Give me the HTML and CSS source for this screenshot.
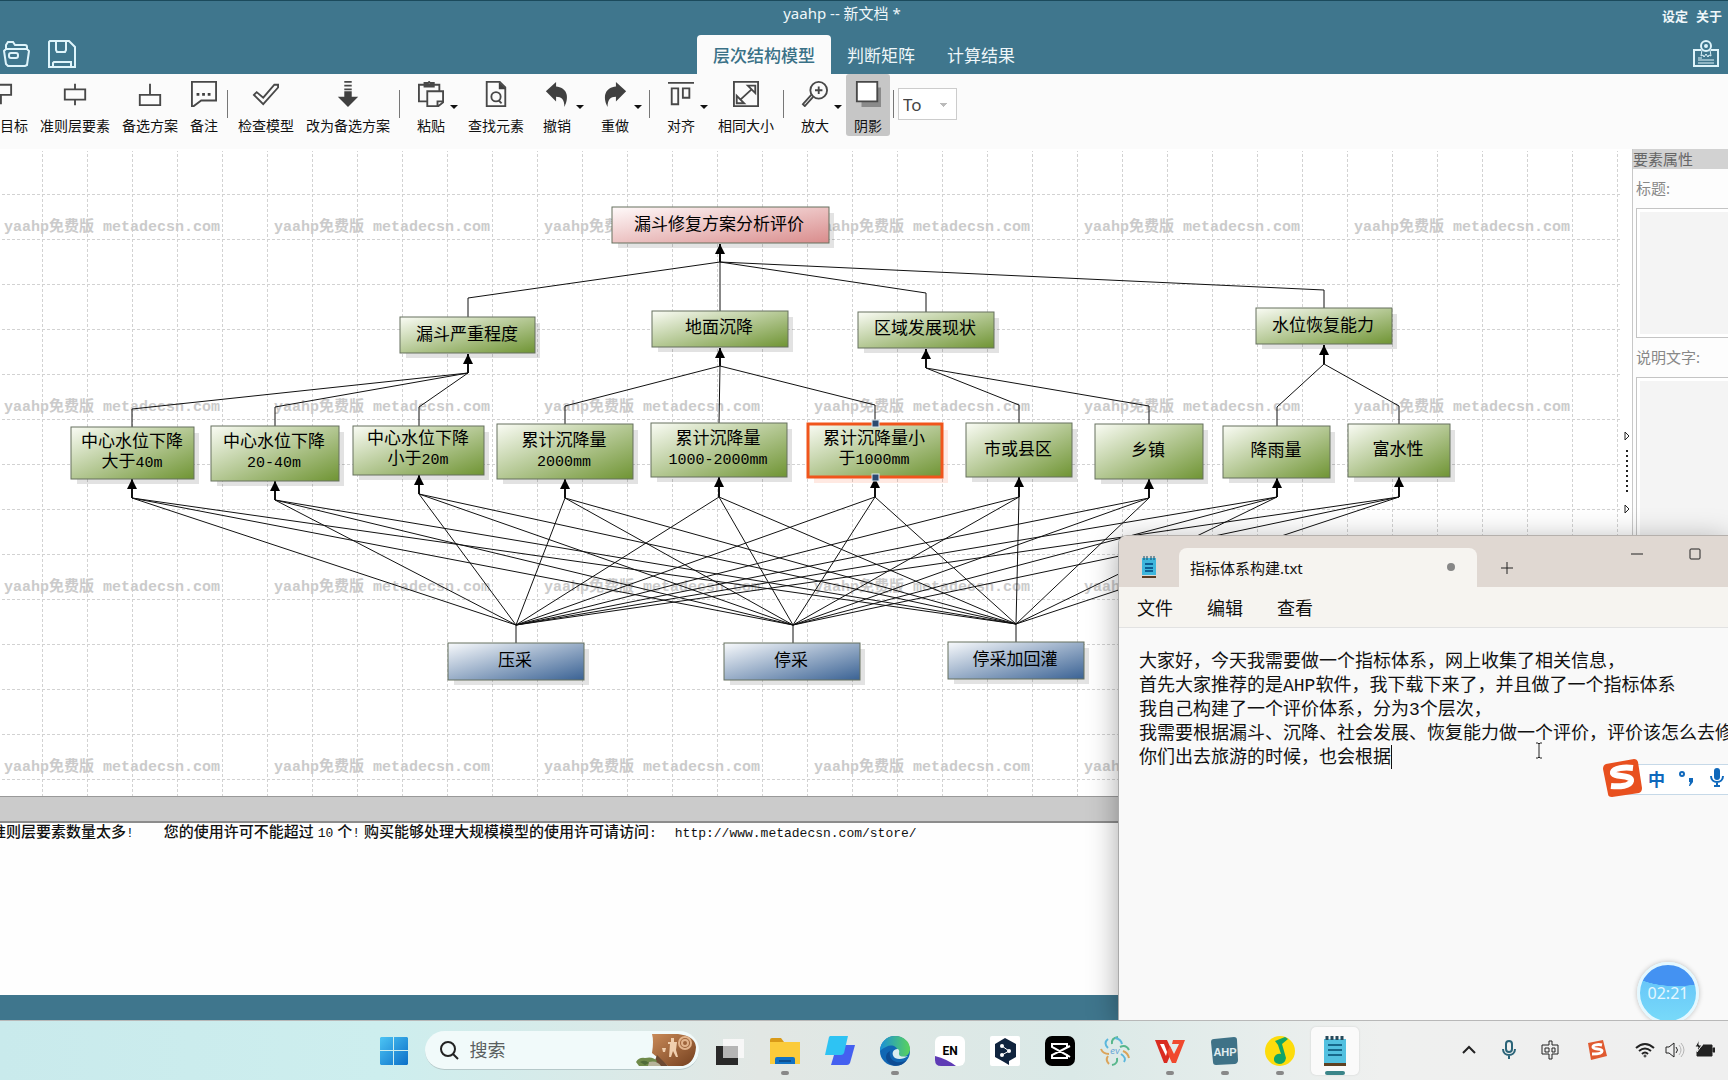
FILE: index.html
```html
<!DOCTYPE html>
<html lang="zh-CN">
<head>
    <meta charset="UTF-8">
    <title>yaahp -- 新文档 *</title>
    <link rel="stylesheet" href="styles.css">
</head>
<body>

<div class="desktop">
    <header class="titlebar">
        <div class="quick">
            <button aria-label="打开"><svg width="28" height="28" viewBox="0 0 28 28"><path d="M3 10V5l2-3h5l2 3h10a2 2 0 0 1 2 2v3M3 9h21l2 2-2 14-2 1H5l-2-2-2-13z"/><rect x="6" y="13" width="9" height="5" rx="2"/></svg></button>
            <button aria-label="保存"><svg width="28" height="28" viewBox="0 0 28 28"><path d="M2 1h19l6 6v20H1V2zM8 1v9l1 2h8l1-2V1M5 27v-4l1-1h17v5"/></svg></button>
        </div>
        <div class="center">
            <h1>yaahp -- 新文档 *</h1>
            <nav class="tabs">
                <button class="tab active">层次结构模型</button>
                <button class="tab">判断矩阵</button>
                <button class="tab">计算结果</button>
            </nav>
        </div>
        <div class="corner">
            <div class="links"><a href="#">设定</a><a href="#">关于</a></div>
            <button aria-label="许可"><svg width="28" height="28" viewBox="0 0 28 28"><path d="M9 10H2v16h24V10h-7"/><circle cx="14" cy="6" r="5"/><circle cx="14" cy="6" r="1"/><path class="fine" d="M10 10l-1 6 2-1 1 2 2-3 2 3 1-2 2 1-1-6M6 18h4M6 20h16M6 23h16"/></svg></button>
        </div>
    </header>

    <div class="toolbar">
        <button class="tool"><svg width="28" height="28" viewBox="0 0 28 28"><path d="M4 4h22v11H4zM15 15v10"/></svg>决策目标</button>
        <button class="tool"><svg width="28" height="28" viewBox="0 0 28 28"><path d="M3 9h22v11H3zM14 3v6M14 20v6"/></svg>准则层要素</button>
        <button class="tool"><svg width="28" height="28" viewBox="0 0 28 28"><path d="M3 15h22v11H3zM14 3v12"/></svg>备选方案</button>
        <button class="tool"><svg width="28" height="28" viewBox="0 0 28 28"><path d="M1 1h26v20H11l-8 6H1z"/><path class="solid" d="M6 13h3v3H6zM12 13h3v3h-3zM18 13h3v3h-3z"/></svg>备注</button>
        <span class="sep"></span>
        <button class="tool"><svg width="28" height="28" viewBox="0 0 28 28"><path d="M1 15l3-3 7 6L23 4h4v3L11 25z"/></svg>检查模型</button>
        <button class="tool"><svg width="28" height="28" viewBox="0 0 28 28"><path d="M10 1h8M10 5h8M10 9h8"/><path class="solid" d="M10 11h8v6h7L14 28 3 17h7z"/></svg>改为备选方案</button>
        <span class="sep"></span>
        <button class="tool drop"><svg width="28" height="28" viewBox="0 0 28 28"><path d="M10 22H1V4h22v7M7 4V2h4l1-1 1 1h4v4H7zM10 11h17v12l-5 4H10zM21 27v-5h6"/></svg>粘贴</button>
        <button class="tool"><svg width="28" height="28" viewBox="0 0 28 28"><path d="M4 1h14l6 6v20H4z"/><path class="solid" d="M17 1l8 8h-8z"/><circle cx="14" cy="17" r="5"/><path d="M17 21l3 3"/></svg>查找元素</button>
        <button class="tool drop"><svg width="28" height="28" viewBox="0 0 28 28"><path class="solid" d="M2 11L13 1v5c11 1 15 10 9 22 0-8-3-11-9-11v5z"/></svg>撤销</button>
        <button class="tool drop"><svg width="28" height="28" viewBox="0 0 28 28"><path class="solid" d="M26 11L15 1v5C4 7 0 16 6 28c0-8 3-11 9-11v5z"/></svg>重做</button>
        <span class="sep"></span>
        <button class="tool drop"><svg width="28" height="28" viewBox="0 0 28 28"><path d="M0 2h28M4 8h7v17H4zM16 8h7v10h-7z"/></svg>对齐</button>
        <button class="tool"><svg width="28" height="28" viewBox="0 0 28 28"><path d="M1 1h26v26H1zM16 5h8v8zM4 16v8h8zM20 9L8 20"/></svg>相同大小</button>
        <span class="sep"></span>
        <button class="tool drop"><svg width="28" height="28" viewBox="0 0 28 28"><circle cx="18" cy="10" r="9"/><path d="M12 17L3 27l-2-2 9-10M14 10h8M18 6v8"/></svg>放大</button>
        <button class="tool pressed"><svg width="28" height="28" viewBox="0 0 28 28"><path fill="#8a8a8a" stroke="none" d="M7 7h21v21H7z"/><path fill="#fff" d="M2 1h22v21H2z"/></svg>阴影</button>
        <span class="sep"></span>
        <select aria-label="方向"><option>To</option></select>
    </div>

    <main class="workspace">
        <svg class="canvas" role="img" aria-label="层次结构模型">
            <defs>
                <pattern id="grid" x="42" y="45" width="45" height="45" patternUnits="userSpaceOnUse">
                    <path class="grid-line" d="M0 0H45M0 0V45"/>
                </pattern>
                <linearGradient id="red" x1="0" y1="0" x2="1" y2="1"><stop offset="0" stop-color="#fffafa"/><stop offset="1" stop-color="#d98c8c"/></linearGradient>
                <linearGradient id="green" x1="0" y1="0" x2="1" y2="1"><stop offset="0" stop-color="#fafcf5"/><stop offset="1" stop-color="#6f9433"/></linearGradient>
                <linearGradient id="blue" x1="0" y1="0" x2="1" y2="1"><stop offset="0" stop-color="#f8fafc"/><stop offset="1" stop-color="#3a6294"/></linearGradient>
                <marker id="arrow" markerWidth="10" markerHeight="10" refX="10" refY="5" orient="auto" markerUnits="userSpaceOnUse"><path d="M0 0L10 5 0 10z"/></marker>
            </defs>
            <rect y="2" width="100%" height="100%" fill="url(#grid)"/>

            <g class="watermark">
                <text y="82"><tspan x="4">yaahp免费版 metadecsn.com</tspan><tspan x="274">yaahp免费版 metadecsn.com</tspan><tspan x="544">yaahp免费版 metadecsn.com</tspan><tspan x="814">yaahp免费版 metadecsn.com</tspan><tspan x="1084">yaahp免费版 metadecsn.com</tspan><tspan x="1354">yaahp免费版 metadecsn.com</tspan></text>
                <text y="262"><tspan x="4">yaahp免费版 metadecsn.com</tspan><tspan x="274">yaahp免费版 metadecsn.com</tspan><tspan x="544">yaahp免费版 metadecsn.com</tspan><tspan x="814">yaahp免费版 metadecsn.com</tspan><tspan x="1084">yaahp免费版 metadecsn.com</tspan><tspan x="1354">yaahp免费版 metadecsn.com</tspan></text>
                <text y="442"><tspan x="4">yaahp免费版 metadecsn.com</tspan><tspan x="274">yaahp免费版 metadecsn.com</tspan><tspan x="544">yaahp免费版 metadecsn.com</tspan><tspan x="814">yaahp免费版 metadecsn.com</tspan><tspan x="1084">yaahp免费版 metadecsn.com</tspan></text>
                <text y="622"><tspan x="4">yaahp免费版 metadecsn.com</tspan><tspan x="274">yaahp免费版 metadecsn.com</tspan><tspan x="544">yaahp免费版 metadecsn.com</tspan><tspan x="814">yaahp免费版 metadecsn.com</tspan><tspan x="1084">yaahp免费版 metadecsn.com</tspan></text>
            </g>

            <g class="shadows">
                <rect x="618" y="64" width="216" height="35"/>
                <rect x="406" y="174" width="134" height="35"/><rect x="658" y="168" width="135" height="35"/><rect x="864" y="169" width="135" height="35"/><rect x="1262" y="165" width="135" height="35"/>
                <rect x="77" y="284" width="122" height="51"/><rect x="217" y="283" width="127" height="54"/><rect x="359" y="283" width="130" height="48"/><rect x="503" y="281" width="135" height="54"/><rect x="657" y="280" width="135" height="53"/><rect class="hot" x="814" y="281" width="134" height="53"/><rect x="972" y="280" width="105" height="53"/><rect x="1101" y="281" width="107" height="54"/><rect x="1229" y="283" width="106" height="51"/><rect x="1354" y="281" width="101" height="52"/>
                <rect x="454" y="500" width="135" height="36"/><rect x="730" y="500" width="135" height="36"/><rect x="954" y="499" width="135" height="36"/>
            </g>

            <!-- goal to criteria -->
            <g class="edges">
                <path d="M468 168V149L720 113M926 163V144L720 113M1324 159V141L720 113M720 162V113"/>
                <path d="M132 278V260L468 224M275 277V258L468 224M419 277V258L468 224"/>
                <path d="M565 275V257L720 217M719 274L720 217M875 274V256L720 217"/>
                <path d="M1019 274V256L926 219M1149 275V257L926 219"/>
                <path d="M1277 277V258L1324 215M1399 275V257L1324 215"/>
            </g>
            <!-- sub-criteria to alternatives -->
            <g class="edges">
                <path d="M516 494V476M516 476L132 349M516 476L275 351M516 476L419 345M516 476L565 349M516 476L719 348M516 476L875 348M516 476L1019 348M516 476L1149 349M516 476L1277 348M516 476L1399 348"/>
                <path d="M793 494V476M793 476L132 349M793 476L275 351M793 476L419 345M793 476L565 349M793 476L719 348M793 476L875 348M793 476L1019 348M793 476L1149 349M793 476L1277 348M793 476L1399 348"/>
                <path d="M1016 493V475M1016 475L132 349M1016 475L275 351M1016 475L419 345M1016 475L565 349M1016 475L719 348M1016 475L875 348M1016 475L1019 348M1016 475L1149 349M1016 475L1277 348M1016 475L1399 348"/>
            </g>
            <g class="edges arrows">
                <path d="M720 113V95"/>
                <path d="M468 224V205"/><path d="M720 217V199"/><path d="M926 219V200"/><path d="M1324 215V196"/>
                <path d="M132 349V330"/><path d="M275 351V332"/><path d="M419 345V326"/><path d="M565 349V330"/><path d="M719 348V328"/><path d="M875 348V329"/><path d="M1019 348V328"/><path d="M1149 349V330"/><path d="M1277 348V329"/><path d="M1399 348V328"/>
            </g>

            <g class="node goal"><rect x="612" y="58" width="217" height="36"/><text x="719" y="81">漏斗修复方案分析评价</text></g>

            <g class="node criterion">
                <rect x="400" y="168" width="135" height="36"/><text x="467" y="191">漏斗严重程度</text>
                <rect x="652" y="162" width="136" height="36"/><text x="719" y="184">地面沉降</text>
                <rect x="858" y="163" width="136" height="36"/><text x="925" y="185">区域发展现状</text>
                <rect x="1256" y="159" width="136" height="36"/><text x="1323" y="182">水位恢复能力</text>

                <rect x="71" y="278" width="123" height="52"/><text y="298"><tspan x="132">中心水位下降</tspan><tspan x="132" dy="20">大于</tspan><tspan class="num">40m</tspan></text>
                <rect x="211" y="277" width="128" height="55"/><text y="298"><tspan x="274">中心水位下降</tspan><tspan class="num" x="274" dy="20">20-40m</tspan></text>
                <rect x="353" y="277" width="131" height="49"/><text y="295"><tspan x="418">中心水位下降</tspan><tspan x="418" dy="20">小于</tspan><tspan class="num">20m</tspan></text>
                <rect x="497" y="275" width="136" height="55"/><text y="297"><tspan x="564">累计沉降量</tspan><tspan class="num" x="564" dy="20">2000mm</tspan></text>
                <rect x="651" y="274" width="136" height="54"/><text y="295"><tspan x="718">累计沉降量</tspan><tspan class="num" x="718" dy="20">1000-2000mm</tspan></text>
                <g class="selected"><rect x="808" y="275" width="134" height="53"/><text y="295"><tspan x="874">累计沉降量小</tspan><tspan x="874" dy="20">于</tspan><tspan class="num">1000mm</tspan></text></g>
                <rect x="966" y="274" width="106" height="54"/><text x="1018" y="306">市或县区</text>
                <rect x="1095" y="275" width="108" height="55"/><text x="1148" y="307">乡镇</text>
                <rect x="1223" y="277" width="107" height="52"/><text x="1276" y="307">降雨量</text>
                <rect x="1348" y="275" width="102" height="53"/><text x="1398" y="306">富水性</text>
            </g>
            <g class="handles"><rect x="872" y="271" width="7" height="7"/><rect x="872" y="325" width="7" height="7"/></g>

            <g class="node option">
                <rect x="448" y="494" width="136" height="37"/><text x="515" y="517">压采</text>
                <rect x="724" y="494" width="136" height="37"/><text x="791" y="517">停采</text>
                <rect x="948" y="493" width="136" height="37"/><text x="1015" y="516">停采加回灌</text>
            </g>
        </svg>

        <div class="splitter">
            <svg width="8" height="84" viewBox="0 0 8 84"><path class="tri" d="M2 1l4 4-4 4zM2 74l4 4-4 4z"/><path class="dots" d="M4 19v45"/></svg>
        </div>

        <aside class="props">
            <h2>要素属性</h2>
            <label for="title">标题:</label>
            <textarea id="title" class="prop-title"></textarea>
            <label for="note">说明文字:</label>
            <textarea id="note" class="prop-note"></textarea>
        </aside>
    </main>

    <div class="hbar"></div>
    <section class="log">
        <p><span>准则层要素数量太多<code>!</code></span><span>您的使用许可不能超过 <code>10</code> 个<code>!</code> 购买能够处理大规模模型的使用许可请访问<code>:</code></span><a href="#"><code>http://www.metadecsn.com/store/</code></a></p>
    </section>
    <footer class="foot"></footer>

    <!-- notepad window -->
    <section class="notepad">
        <div class="np-bar">
            <svg class="np-icon" width="16" height="22" viewBox="0 0 16 22"><rect x="1" y="2" width="14" height="17" fill="#3fb6dc"/><path d="M1 20h14v2H1z" fill="#5a3a22"/><path d="M4 8h8M4 12h8M4 15h8" stroke="#0d5e93" stroke-width="2"/><path d="M3 0v4M6 0v4M10 0v4M13 0v4" stroke="#134a66"/></svg>
            <div class="np-tab"><span>指标体系构建.txt</span><i></i></div>
            <button class="np-plus" aria-label="新建标签页"><svg width="14" height="14" viewBox="0 0 14 14"><path d="M7 1v12M1 7h12"/></svg></button>
            <div class="np-win">
                <button aria-label="最小化"><svg width="12" height="12" viewBox="0 0 12 12"><path d="M0 6h12"/></svg></button>
                <button aria-label="最大化"><svg width="12" height="12" viewBox="0 0 12 12"><rect x="1" y="1" width="10" height="10" rx="1"/></svg></button>
            </div>
        </div>
        <div class="np-menu"><button>文件</button><button>编辑</button><button>查看</button></div>
        <div class="np-body">
            <textarea aria-label="文本" wrap="off">大家好，今天我需要做一个指标体系，网上收集了相关信息，
首先大家推荐的是AHP软件，我下载下来了，并且做了一个指标体系
我自己构建了一个评价体系，分为3个层次，
我需要根据漏斗、沉降、社会发展、恢复能力做一个评价，评价该怎么去修复
你们出去旅游的时候，也会根据</textarea>
            <span class="caret"></span>
            <svg class="ibeam" width="8" height="17" viewBox="0 0 8 17"><path d="M1 1h2l1 1 1-1h2M4 2v13M1 16h2l1-1 1 1h2"/></svg>
        </div>
    </section>

    <div class="ime">
        <svg class="ime-logo" width="40" height="40" viewBox="0 0 40 40"><path fill="#e8501f" d="M4 6L32 1q3 0 4 3l4 26q0 4-3 5L10 39q-4 0-4-3L1 11q0-4 3-5z"/><path fill="none" stroke="#fff" stroke-width="6" d="M31 10c-9-1-19 0-20 4-1 6 19 2 18 9-1 5-11 6-20 5"/></svg>
        <span class="zhong">中</span>
        <svg width="16" height="16" viewBox="0 0 16 16"><circle cx="3" cy="4" r="2" fill="none" stroke="#0f68bb" stroke-width="2"/><path fill="#0f68bb" d="M10 8h4v4l-3 4h-1l1-4h-1z"/></svg>
        <svg width="16" height="20" viewBox="0 0 16 20"><rect x="5" y="0" width="6" height="12" rx="3" fill="#0f68bb"/><path d="M2 8c0 8 12 8 12 0M8 14v4M5 18h6" fill="none" stroke="#0f68bb" stroke-width="2"/></svg>
    </div>

    <div class="timer">02:21</div>
</div>

<div class="taskbar">
    <div class="dock">
        <button class="app start" aria-label="开始"><svg width="30" height="30" viewBox="0 0 30 30"><defs><linearGradient id="win" x1="0" y1="0" x2="1" y2="1"><stop offset="0" stop-color="#4cc4f4"/><stop offset="1" stop-color="#0b6fc8"/></linearGradient></defs><path fill="url(#win)" d="M1 2l1-1h12v13H1zM15 1h13l1 1v12H15zM1 15h13v14H2l-1-1zM15 15h14v13l-1 1H15z"/></svg></button>
        <label class="search">
            <svg width="20" height="20" viewBox="0 0 20 20"><circle cx="9" cy="9" r="7"/><path d="M14 14l5 5"/></svg>
            <input type="text" placeholder="搜索" aria-label="搜索">
            <svg class="art" width="62" height="34" viewBox="0 0 62 34"><defs><linearGradient id="rock" x1="0" y1="0" x2="1" y2="1"><stop offset="0" stop-color="#c98a58"/><stop offset="1" stop-color="#74401f"/></linearGradient></defs><path fill="url(#rock)" d="M17 1h26q17 2 18 13-1 16-13 19H33L17 20q2-12 0-19z"/><path fill="#6d4a33" d="M22 22l11 11H18z"/><path fill="#6f8a4a" d="M1 29q3-5 9-4 8-2 12 3l-4 5H4z"/><path fill="#b6b39a" d="M14 29q8-2 12 4H13z"/><path fill="#4f6b38" d="M5 29q5-3 9 1l-4 2z"/><path fill="#f0cfae" d="M36 5h3v4h3l-1 8 2 7h-2l-3-6-2 6h-2l1-13h-2v-2h3zM27 15h4l-1 4h-2z"/><circle cx="50" cy="10" r="6" fill="none" stroke="#e2b48c"/><circle cx="50" cy="10" r="3" fill="none" stroke="#e2b48c"/></svg>
        </label>
        <button class="app" aria-label="任务视图"><svg width="30" height="30" viewBox="0 0 30 30"><path fill="#292929" d="M1 10h22v19H1z"/><path fill="#f7f7f7" d="M8 3h21v19H8z"/><path fill="#b5b5b5" d="M8 10h15v12H8z"/></svg></button>
        <button class="app run" aria-label="文件资源管理器"><svg width="30" height="30" viewBox="0 0 30 30"><path fill="#d99a18" d="M0 4q0-2 2-2h9l3 4v5H0z"/><path fill="#fbcb3b" d="M0 6h30v22H0z"/><path fill="#1172c4" d="M5 28v-5q0-2 2-2h16q2 0 2 2v5z"/><path fill="#0b4f92" d="M9 24h12v2H9z"/></svg></button>
        <button class="app" aria-label="飞书"><svg width="30" height="30" viewBox="0 0 30 30"><path fill="#4460f0" d="M12 9h18l-5 18q-1 2-3 2H6z"/><path fill="#2ec3f3" d="M5 0h18l-4 17q-1 2-3 2H0L4 1z"/></svg></button>
        <button class="app run" aria-label="Edge"><svg width="30" height="30" viewBox="0 0 30 30"><defs><linearGradient id="edge" x1="0" y1="0" x2="1" y2="0"><stop offset="0" stop-color="#1a8fd8"/><stop offset="1" stop-color="#5ad35c"/></linearGradient></defs><circle cx="15" cy="15" r="15" fill="#1167b4"/><path fill="url(#edge)" d="M0 15C0 6 7 0 15 0c9 0 15 6 15 13 0 5-4 8-8 8-5 0-3-3-4-6-1-5-7-7-12-4-3 1-5 3-6 4z"/><path fill="#0d4c94" d="M10 15c-2 8 6 15 17 9-6 8-16 7-20 1-2-4-1-8 3-10z"/><path fill="#d9eef0" d="M18 13c-6 0-7 6-3 9 4 2 9 1 13-2-4 1-9 1-9-2 0-2 1-3-1-5z"/></svg></button>
        <button class="app" aria-label="EN"><svg width="30" height="30" viewBox="0 0 30 30"><rect width="30" height="30" rx="6" fill="#fff"/><path fill="#5e3bb5" d="M0 20q12 3 21 10H6q-6 0-6-6z"/><text class="en" x="15" y="19">EN</text></svg></button>
        <button class="app" aria-label="DeepL"><svg width="30" height="30" viewBox="0 0 30 30"><rect width="30" height="30" rx="2" fill="#fff"/><path fill="#10243e" d="M15 2l11 6v13l-7 4v4l-5-3-9-5V8z"/><path d="M12 10l7 5-7 4" fill="none" stroke="#fff"/><g fill="#fff"><circle cx="12" cy="10" r="2"/><circle cx="19" cy="15" r="2"/><circle cx="12" cy="19" r="2"/></g></svg></button>
        <button class="app" aria-label="剪映"><svg width="30" height="30" viewBox="0 0 30 30"><rect width="30" height="30" rx="7" fill="#000"/><path d="M25 10L7 19v3h15v-3L7 11V8h15v3M22 19l3 2" fill="none" stroke="#fff" stroke-width="2"/></svg></button>
        <button class="app" aria-label="EV"><svg width="30" height="30" viewBox="0 0 30 30" fill="none" stroke-width="2"><path stroke="#58b78c" d="M12 8q-1-6 6-7M20 11q6-3 9 3M17 22q1 6-5 7"/><path stroke="#5bb7dc" d="M8 12q-5-5 0-9M21 18q6 4 3 8M22 8q-1-5-7-6"/><path stroke="#dba45a" d="M9 18q-6 0-8-5M8 20q-3 4 1 8M23 15q5 2 6 7"/><text class="ev" x="15" y="18">ev</text></svg></button>
        <button class="app run" aria-label="WPS"><svg width="30" height="30" viewBox="0 0 30 30"><path fill="#d92b20" d="M0 4h12l5 11-5 12H9z"/><path fill="#fff" d="M5 8h4l3 8-1 4z"/><path fill="#f0492e" d="M18 4h12l-9 23h-4l-5-11 3-6 4 8 5-10h-7z"/></svg></button>
        <button class="app run" aria-label="yaahp"><svg width="30" height="30" viewBox="0 0 30 30"><path fill="#3f7287" d="M4 3l20-2q3 0 3 3l1 20q0 3-3 4L6 29q-3 0-3-3L1 6q0-3 3-3z"/><text class="ahp" x="15" y="20">AHP</text></svg></button>
        <button class="app run" aria-label="QQ音乐"><svg width="30" height="30" viewBox="0 0 30 30"><circle cx="15" cy="15" r="15" fill="#fddc0c"/><path fill="#12a468" d="M10 5l10-4 3 2-6 5 4 14q-1 6-7 6-6-1-5-6 2-5 7-4l-3-9z"/></svg></button>
        <button class="app current" aria-label="记事本"><svg width="30" height="30" viewBox="0 0 30 30"><rect x="4" y="3" width="22" height="24" fill="#52c0e0"/><path fill="#5f4123" d="M4 27h22v3H4z"/><path d="M8 9h14M8 14h14M8 19h14" stroke="#17688c" stroke-width="2"/><path d="M7 0v4M12 0v4M17 0v4M22 0v4" stroke="#26495a" stroke-width="3"/></svg></button>
    </div>
    <div class="tray">
        <svg width="16" height="20" viewBox="0 0 16 20"><path stroke-width="2" d="M2 13l6-6 6 6"/></svg>
        <svg width="16" height="20" viewBox="0 0 16 20" class="mic"><rect x="5" y="1" width="6" height="11" rx="3"/><path d="M2 9c0 8 12 8 12 0M8 15v4"/></svg>
        <svg width="18" height="20" viewBox="0 0 18 20"><path d="M8 1h3v4h6v9h-6v5H8v-5H1V5h7zM4 8v4h4V8zM11 8v4h3V8z"/></svg>
        <svg width="20" height="20" viewBox="0 0 20 20"><path fill="#e05a30" stroke="none" d="M1 3l15-3 4 16-16 4z"/><path stroke="#fff" stroke-width="3" d="M15 5c-4-1-9 0-9 2 0 3 9 1 9 4 0 3-6 3-10 3"/></svg>
        <svg width="20" height="20" viewBox="0 0 20 20"><path stroke-width="2" d="M1 8q9-8 18 0M4 11q6-5 12 0M7 14q3-3 6 0"/><circle cx="10" cy="16" r="1"/></svg>
        <svg width="20" height="20" viewBox="0 0 20 20"><path d="M1 7h3l5-4v14l-5-4H1zM11 7q3 3 0 6"/><path stroke="#b5b5b5" d="M14 5q4 5 0 10M16 3q6 7 0 14"/></svg>
        <svg width="20" height="20" viewBox="0 0 20 20"><path fill="#222" d="M8 5h9v11H2v-5M18 8h2v4h-2z"/><path fill="#222" stroke="#eee" d="M4 0L0 7h3l-1 5 5-7H4z"/></svg>
    </div>
</div>

</body>
</html>
```
FILE: styles.css
```css
* {
    box-sizing: border-box;
}
body {
    margin: 0;
    height: 100vh;
    display: flex;
    flex-direction: column;
    overflow: hidden;
    font-family: "Noto Sans", "Noto Sans CJK SC", sans-serif;
    font-size: 14px;
    color: #111;
}
button, input, select, textarea {
    font: inherit;
    color: inherit;
    margin: 0;
    padding: 0;
    border: none;
    background: none;
}
svg {
    display: block;
}
a {
    color: inherit;
    text-decoration: none;
}
.desktop {
    position: relative;
    flex: 1;
    min-height: 0;
    display: flex;
    flex-direction: column;
    overflow: hidden;
}

/* title bar */
.titlebar {
    height: 74px;
    display: grid;
    grid-template-columns: 1fr auto 1fr;
    background: #3f768d;
    border-top: 1px solid #1b4a5c;
    color: #eef6f9;
}
.titlebar svg {
    fill: none;
    stroke: #def4fb;
    stroke-width: 2;
}
.titlebar .fine {
    stroke-width: 1;
}
.quick {
    display: flex;
    align-items: flex-end;
    gap: 17px;
    padding: 0 0 6px 3px;
}
.center {
    display: flex;
    flex-direction: column;
    justify-content: space-between;
}
h1 {
    margin: 0;
    padding-right: 44px;
    font-size: 15px;
    line-height: 24px;
    font-weight: 400;
    text-align: center;
}
.tabs {
    display: flex;
}
.tab {
    height: 39px;
    padding: 0 16px;
    font-size: 17px;
}
.tab.active {
    background: #fbfbfb;
    color: #3a7187;
    font-weight: 500;
    border-radius: 4px 4px 0 0;
}
.corner {
    display: flex;
    flex-direction: column;
    align-items: flex-end;
    justify-content: space-between;
    padding: 6px 6px 6px 0;
}
.corner button {
    padding-right: 2px;
}
.links {
    display: flex;
    gap: 8px;
    font-size: 13px;
    line-height: 18px;
    font-weight: 700;
}

/* toolbar */
.toolbar {
    height: 75px;
    display: flex;
    align-items: flex-start;
    background: #fbfbfb;
    margin-left: -34px;
}
.tool {
    position: relative;
    display: flex;
    flex-direction: column;
    align-items: center;
    gap: 9px;
    height: 62px;
    padding: 7px 6px 0;
    line-height: 20px;
    white-space: nowrap;
}
.tool svg {
    fill: none;
    stroke: #484848;
    stroke-width: 2;
}
.tool .solid {
    fill: #404040;
    stroke: none;
}
.drop {
    margin: 0 11px 0 7px;
}
.drop::after {
    content: "";
    position: absolute;
    right: -7px;
    top: 31px;
    border: 4px solid transparent;
    border-top-color: #111;
    border-bottom: none;
}
.pressed {
    padding: 7px 8px 0;
    background: #c6c6c6;
    border-radius: 3px;
}
.sep {
    width: 1px;
    height: 28px;
    margin: 16px 4px 0 3px;
    background: #777;
}
.toolbar select {
    appearance: none;
    width: 59px;
    height: 32px;
    margin-top: 14px;
    padding-left: 4px;
    font-size: 17px;
    color: #444;
    border: 1px solid #ccc;
    background: linear-gradient(135deg, #bbb 50%, transparent 50%) 45px 14px / 4px 4px no-repeat, linear-gradient(225deg, #bbb 50%, transparent 50%) 41px 14px / 4px 4px no-repeat, #fff;
}

/* model canvas */
.workspace {
    flex: 1;
    min-height: 0;
    display: grid;
    grid-template-columns: 1fr 10px 96px;
    background: #fff;
}
.canvas {
    width: 100%;
    height: 100%;
    min-height: 0;
    overflow: hidden;
}
.grid-line {
    fill: none;
    stroke: #d2d2d2;
    stroke-width: 2;
    stroke-dasharray: 3 2;
}
.watermark {
    font: 700 15px "Liberation Mono", "Noto Sans CJK SC", monospace;
    fill: #cbcbcb;
    white-space: pre;
}
.shadows {
    fill: #000;
    opacity: .11;
}
.shadows .hot {
    fill: #f40;
}
.edges {
    fill: none;
    stroke: #111;
    stroke-width: 1;
}
.arrows {
    stroke-width: 2;
}
.arrows path {
    marker-end: url(#arrow);
}
.node {
    font: 400 17px "Noto Sans CJK SC", sans-serif;
    text-anchor: middle;
}
.node rect {
    stroke: #66705f;
}
.goal rect {
    fill: url(#red);
}
.criterion rect {
    fill: url(#green);
}
.option rect {
    fill: url(#blue);
}
.num {
    font: 400 15px "Liberation Mono", monospace;
}
.selected rect {
    stroke: #f0551c;
    stroke-width: 3;
}
.handles {
    fill: #2b4a70;
    stroke: #dce8ee;
}
.splitter {
    display: flex;
    align-items: center;
    justify-content: center;
}
.tri {
    fill: none;
    stroke: #222;
}
.dots {
    stroke: #222;
    stroke-width: 2;
    stroke-dasharray: 2 3;
}
.props {
    display: flex;
    flex-direction: column;
    min-height: 0;
    overflow: hidden;
    background: #fdfdfd;
    border-left: 1px solid #c8c8c8;
    color: #888;
    font-size: 15px;
}
.props h2 {
    margin: 0;
    font-size: 15px;
    line-height: 20px;
    font-weight: 400;
    color: #666;
    background: #d2d2d2;
}
.props label {
    padding: 0 3px;
    line-height: 39px;
}
.props textarea {
    margin-left: 3px;
    resize: none;
    background: #f4f4f4;
    border: 1px solid #c4c4c4;
    border-right: none;
    box-shadow: inset 3px 3px #fff, inset 0 -3px #fff;
}
.prop-title {
    height: 130px;
}
.prop-note {
    flex: 1;
}

/* message log */
.hbar {
    height: 27px;
    background: #cbcbcb;
    border-top: 1px solid #999;
    border-bottom: 2px solid #8c8c8c;
}
.log {
    height: 172px;
    background: #fefefe;
    overflow: hidden;
}
.log p {
    display: flex;
    gap: 30px;
    margin: 0 0 0 -9px;
    font-size: 15px;
    line-height: 17px;
    font-weight: 500;
    white-space: nowrap;
}
.log a {
    margin-left: -12px;
}
.log code {
    font: 400 13px "Liberation Mono", monospace;
}
.foot {
    height: 25px;
    background: #3f768d;
}

/* notepad */
.notepad {
    position: absolute;
    left: 1118px;
    right: 0;
    top: 535px;
    bottom: 0;
    display: flex;
    flex-direction: column;
    background: #f9f9f9;
    border-left: 1px solid #aaa;
    border-top: 1px solid #b5b0ac;
    border-top-left-radius: 9px;
    box-shadow: 0 6px 30px rgba(0, 0, 0, .35);
    overflow: hidden;
}
.np-bar {
    height: 51px;
    display: flex;
    align-items: flex-end;
    background: #e0d8d2;
}
.np-icon {
    margin: 0 22px 9px 22px;
}
.np-tab {
    width: 298px;
    height: 39px;
    display: flex;
    align-items: center;
    justify-content: space-between;
    padding: 0 22px 1px 11px;
    font-size: 15px;
    background: #f6f4f0;
    border-radius: 8px 8px 0 0;
}
.np-tab i {
    width: 8px;
    height: 8px;
    border-radius: 50%;
    background: #878787;
}
.notepad button svg {
    fill: none;
    stroke: #222;
    stroke-width: 1;
}
.np-plus {
    margin: 0 0 12px 23px;
}
.np-win {
    flex: 1;
    align-self: flex-start;
    display: flex;
    justify-content: flex-end;
    gap: 46px;
    padding: 12px 27px 0 0;
}
.np-menu {
    height: 41px;
    display: flex;
    gap: 34px;
    padding-left: 18px;
    font-size: 18px;
    background: #f6f4f0;
    border-bottom: 1px solid #e2e2e2;
}
.np-body {
    position: relative;
    flex: 1;
    display: flex;
}
.np-body textarea {
    flex: 1;
    padding: 22px 0 0 20px;
    font: 400 18px/24px "Liberation Mono", "Noto Sans CJK SC", monospace;
    resize: none;
    overflow: hidden;
    white-space: pre;
}
.caret {
    position: absolute;
    left: 272px;
    top: 117px;
    width: 1px;
    height: 24px;
    background: #111;
}
.ibeam {
    position: absolute;
    left: 416px;
    top: 114px;
    fill: none;
    stroke: #222;
}
.ime {
    position: absolute;
    right: 0;
    top: 758px;
    display: flex;
    align-items: center;
    gap: 14px;
    height: 40px;
    width: 126px;
    overflow: hidden;
    background: linear-gradient(#fff, #fff) 20px 7px / 125px 29px no-repeat, linear-gradient(#c6d9e8, #c6d9e8) 20px 6px / 125px 31px no-repeat;
}
.ime-logo {
    margin-right: -8px;
}
.ime svg {
    flex: none;
}
.zhong {
    color: #0f68bb;
    font-size: 17px;
    font-weight: 700;
}
.timer {
    position: absolute;
    right: 29px;
    top: 962px;
    width: 62px;
    height: 62px;
    border: 3px solid #e4f8ff;
    border-radius: 50%;
    background: radial-gradient(ellipse 90% 38% at 65% 0, #4492f2 98%, transparent), linear-gradient(#62bff8, #78daf9);
    box-shadow: 0 0 5px #bbb;
    color: #e4f7ff;
    font-size: 16px;
    line-height: 56px;
    text-align: center;
}

/* taskbar */
.taskbar {
    position: relative;
    height: 60px;
    display: flex;
    align-items: center;
    justify-content: center;
    background: linear-gradient(90deg, #c9eaec, #cdeeee 22%, #e2e7e4 44%, #dae9e7 62%, #eff0ef 80%, #efefef);
    border-top: 1px solid #b8b8b8;
}
.dock {
    display: flex;
    align-items: center;
    gap: 7px;
}
.app {
    position: relative;
    width: 48px;
    height: 48px;
    display: flex;
    align-items: center;
    justify-content: center;
    border-radius: 5px;
}
.search {
    width: 274px;
    height: 39px;
    display: flex;
    align-items: center;
    padding: 0 2px 0 14px;
    background: #f1fafa;
    border-bottom: 1px solid #b5c8c9;
    border-radius: 20px;
}
.search svg {
    flex: none;
    fill: none;
    stroke: #222;
    stroke-width: 2;
}
.search .art {
    stroke: none;
}
.search input {
    flex: 1;
    min-width: 0;
    padding-left: 11px;
    font-size: 18px;
    outline: none;
}
.search input::placeholder {
    color: #5a5f60;
    opacity: 1;
}
.run::after, .current::after {
    content: "";
    position: absolute;
    left: 20px;
    bottom: 0;
    width: 8px;
    height: 4px;
    border-radius: 2px;
    background: #888;
}
.current {
    background: #fafafa;
    box-shadow: 0 0 2px #ccc;
}
.current::after {
    left: 14px;
    width: 20px;
    background: #3b8589;
}
.en {
    font: 700 12px Roboto, sans-serif;
    text-anchor: middle;
}
.ev {
    font: italic 10px Lato, sans-serif;
    text-anchor: middle;
    fill: #67a5d6;
    stroke: none;
}
.ahp {
    font: 700 11px "Liberation Sans", sans-serif;
    text-anchor: middle;
    fill: #e2edf0;
}
.tray {
    position: absolute;
    right: 13px;
    top: 19px;
    display: flex;
    gap: 24px;
}
.tray svg {
    fill: none;
    stroke: #222;
}
.tray .mic {
    stroke: #2b6478;
    stroke-width: 2;
}
.tray svg:nth-child(n+4) {
    margin-left: 4px;
}
.tray svg:nth-child(n+6) {
    margin-left: -14px;
}
```
